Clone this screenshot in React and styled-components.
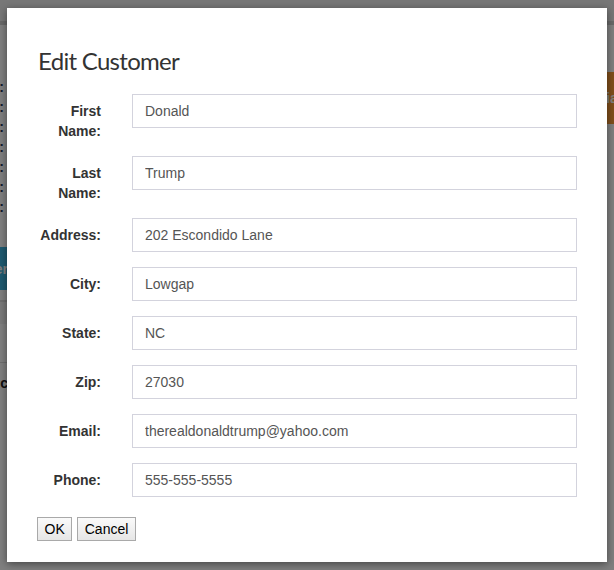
import styled, { createGlobalStyle } from 'styled-components';

const GlobalStyle = createGlobalStyle`
  * { box-sizing: border-box; }
  html, body {
    margin: 0;
    padding: 0;
    background: #fff;
    font-family: "Liberation Sans", Arial, sans-serif;
  }
`;

// the page that sits behind the dialog
const Screen = styled.div`
  position: relative;
  width: 614px;
  height: 570px;
  overflow: hidden;
  background: #fff;
`;
const TopBar = styled.div`
  height: 25px;
  background: #eee;
  border-bottom: 4px solid #d2d2d2;
`;
const PageBody = styled.div`
  display: flex;
  justify-content: space-between;
`;
const SideCol = styled.div`
  width: 8px;
  display: flex;
  flex-direction: column;
`;
const ColonList = styled.div`
  margin-top: 52px;
  display: flex;
  flex-direction: column;
`;
const ColonLine = styled.div`
  height: 20px;
  display: flex;
  justify-content: flex-end;
  padding-right: 4px;
  font-size: 14px;
  font-weight: 700;
  line-height: 20px;
  color: #24325a;
  white-space: nowrap;
`;
const TealBtn = styled.div`
  margin-top: 30px;
  height: 43px;
  width: 8px;
  background: #3cb4e0;
  display: flex;
  justify-content: flex-end;
  align-items: center;
  color: #fff;
  font-weight: 700;
  font-size: 14px;
  white-space: nowrap;
`;
const TableHead = styled.div`
  margin-top: 10px;
  height: 63px;
  border-top: 2px solid #ddd;
  border-bottom: 1px solid #ddd;
  background: linear-gradient(#f2f2f2 0 22px, #fff 22px);
`;
const BoldCut = styled.div`
  margin-top: 12px;
  display: flex;
  justify-content: flex-end;
  font-size: 14px;
  font-weight: 700;
  color: #222;
  white-space: nowrap;
`;
const OrangeBtn = styled.div`
  margin-top: 47px;
  height: 52px;
  width: 8px;
  background: #ff9c38;
  color: #fff;
  font-weight: 700;
  font-size: 14px;
  line-height: 52px;
  white-space: nowrap;
  overflow: hidden;
`;

const Overlay = styled.div`
  position: absolute;
  inset: 0;
  background: rgba(0, 0, 0, 0.5);
  padding: 8px 7px;
`;

const Modal = styled.div`
  width: 600px;
  height: 554px;
  background: #fff;
  box-shadow: 0 2px 8px rgba(0, 0, 0, 0.45);
  padding: 38px 30px 0 30px;
`;
const Title = styled.h2`
  margin: 0 0 18px 1px;
  font-family: Lato, "Open Sans", sans-serif;
  font-weight: 400;
  font-size: 24px;
  letter-spacing: -0.7px;
  line-height: 30px;
  color: #333;
`;
const Form = styled.form`
  display: flex;
  flex-direction: column;
  gap: 15px;
`;
const Row = styled.div`
  display: grid;
  grid-template-columns: 64px 445px;
  column-gap: 31px;
  align-items: start;
`;
const Label = styled.label`
  padding-top: 7px;
  font-size: 14px;
  font-weight: 700;
  line-height: 20px;
  color: #333;
  text-align: right;
`;
const Input = styled.input`
  height: 34px;
  width: 100%;
  padding: 6px 12px;
  border: 1px solid #d3d3dd;
  border-radius: 0;
  font-family: "Liberation Sans", Arial, sans-serif;
  font-size: 14px;
  color: #555;
  background: #fff;
  outline: none;
`;
const Buttons = styled.div`
  display: flex;
  gap: 5px;
  margin-top: 20px;
`;
const Button = styled.button`
  height: 24px;
  padding: 0 6.5px;
  border: 1px solid #a9a9a9;
  border-radius: 0;
  background: linear-gradient(#fafafa, #e6e6e6);
  font-family: "Liberation Sans", Arial, sans-serif;
  font-size: 14px;
  color: #000;
`;

const fields = [
  { label: 'First Name:', value: 'Donald' },
  { label: 'Last Name:', value: 'Trump' },
  { label: 'Address:', value: '202 Escondido Lane' },
  { label: 'City:', value: 'Lowgap' },
  { label: 'State:', value: 'NC' },
  { label: 'Zip:', value: '27030' },
  { label: 'Email:', value: 'therealdonaldtrump@yahoo.com' },
  { label: 'Phone:', value: '555-555-5555' },
];

const colons = ['Name:', 'Name:', 'Address:', 'City:', 'Zip:', 'Email:', 'Phone:'];

const App = () => {
  return (
    <>
      <GlobalStyle />
      <Screen>
        <TopBar />
        <PageBody>
          <SideCol>
            <ColonList>
              {colons.map((c, idx) => (
                <ColonLine key={idx}>{c}</ColonLine>
              ))}
            </ColonList>
            <TealBtn>Edit Customer</TealBtn>
            <TableHead />
            <BoldCut>Customer Detaic</BoldCut>
          </SideCol>
          <SideCol>
            <OrangeBtn>ia</OrangeBtn>
          </SideCol>
        </PageBody>
        <Overlay>
          <Modal>
            <Title>Edit Customer</Title>
            <Form onSubmit={(e) => e.preventDefault()}>
              {fields.map((f, idx) => (
                <Row key={idx}>
                  <Label>{f.label}</Label>
                  <Input defaultValue={f.value} />
                </Row>
              ))}
            </Form>
            <Buttons>
              <Button type="button">OK</Button>
              <Button type="button">Cancel</Button>
            </Buttons>
          </Modal>
        </Overlay>
      </Screen>
    </>
  );
};

export default App;
